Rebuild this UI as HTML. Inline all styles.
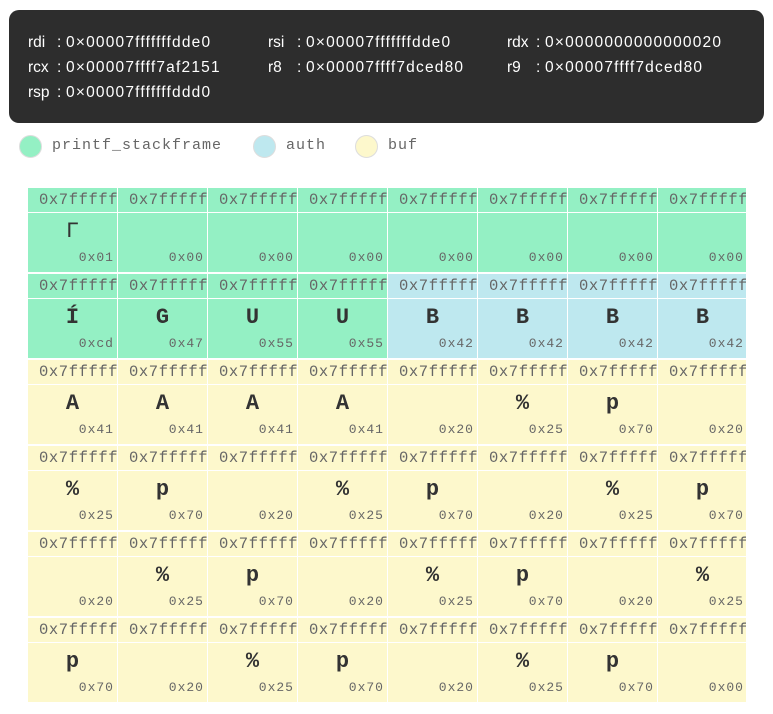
<!DOCTYPE html>
<html><head><meta charset="utf-8"><style>
*{margin:0;padding:0;box-sizing:border-box}
body{width:773px;height:714px;background:#fff;position:relative;overflow:hidden;font-family:"Liberation Sans",sans-serif}
.reg{position:absolute;left:9px;top:10px;width:755px;height:113px;background:#2d2d2d;border-radius:10px;color:#fff;font-size:15.5px}
.reg span{position:absolute;white-space:nowrap}
.reg .v{letter-spacing:1.2px}
.leg{position:absolute;top:135px;height:22px;font-family:"Liberation Mono",monospace;font-size:15px;letter-spacing:1px;color:#666;line-height:22px;padding-left:33px}
.leg i{position:absolute;left:0;top:0;width:23px;height:23px;border-radius:50%;border:1px solid #ddd}
.grid{position:absolute;left:28px;top:188px;width:718px;height:514px;overflow:hidden;display:grid;grid-template-columns:repeat(8,89px);grid-auto-rows:84px;column-gap:1px;row-gap:2px}
.c{position:relative;overflow:hidden;font-family:"Liberation Mono",monospace}
.g{background:#94f0c4}.b{background:#bee8ef}.y{background:#fdf8cc}
.a{position:absolute;left:0;top:0;width:100%;height:25px;border-bottom:1px solid #fff;font-size:15.5px;letter-spacing:0.6px;color:#666;line-height:24px;padding-left:11px;white-space:nowrap;overflow:hidden}
.ch{position:absolute;left:0;width:100%;top:32px;text-align:center;font-size:22px;font-weight:bold;color:#333;line-height:24px}
.h{position:absolute;right:3px;top:62px;font-size:13px;letter-spacing:1px;color:#666}
</style></head><body>
<div class="reg">
<span style="left:19px;top:24px">rdi</span><span style="left:48px;top:24px">:</span><span class="v" style="left:57px;top:24px">0×00007fffffffdde0</span>
<span style="left:259px;top:24px">rsi</span><span style="left:288px;top:24px">:</span><span class="v" style="left:297px;top:24px">0×00007fffffffdde0</span>
<span style="left:498px;top:24px">rdx</span><span style="left:527px;top:24px">:</span><span class="v" style="left:536px;top:24px">0×0000000000000020</span>
<span style="left:19px;top:49px">rcx</span><span style="left:48px;top:49px">:</span><span class="v" style="left:57px;top:49px">0×00007ffff7af2151</span>
<span style="left:259px;top:49px">r8</span><span style="left:288px;top:49px">:</span><span class="v" style="left:297px;top:49px">0×00007ffff7dced80</span>
<span style="left:498px;top:49px">r9</span><span style="left:527px;top:49px">:</span><span class="v" style="left:536px;top:49px">0×00007ffff7dced80</span>
<span style="left:19px;top:74px">rsp</span><span style="left:48px;top:74px">:</span><span class="v" style="left:57px;top:74px">0×00007fffffffddd0</span>
</div>
<div class="leg" style="left:19px"><i style="background:#94f0c4"></i>printf_stackframe</div>
<div class="leg" style="left:253px"><i style="background:#bee8ef"></i>auth</div>
<div class="leg" style="left:355px"><i style="background:#fdf8cc"></i>buf</div>
<div class="grid">
<div class="c g"><div class="a">0x7fffff</div><div class="ch" style="font-weight:normal">Γ</div><div class="h">0x01</div></div>
<div class="c g"><div class="a">0x7fffff</div><div class="h">0x00</div></div>
<div class="c g"><div class="a">0x7fffff</div><div class="h">0x00</div></div>
<div class="c g"><div class="a">0x7fffff</div><div class="h">0x00</div></div>
<div class="c g"><div class="a">0x7fffff</div><div class="h">0x00</div></div>
<div class="c g"><div class="a">0x7fffff</div><div class="h">0x00</div></div>
<div class="c g"><div class="a">0x7fffff</div><div class="h">0x00</div></div>
<div class="c g"><div class="a">0x7fffff</div><div class="h">0x00</div></div>

<div class="c g"><div class="a">0x7fffff</div><div class="ch">Í</div><div class="h">0xcd</div></div>
<div class="c g"><div class="a">0x7fffff</div><div class="ch">G</div><div class="h">0x47</div></div>
<div class="c g"><div class="a">0x7fffff</div><div class="ch">U</div><div class="h">0x55</div></div>
<div class="c g"><div class="a">0x7fffff</div><div class="ch">U</div><div class="h">0x55</div></div>
<div class="c b"><div class="a">0x7fffff</div><div class="ch">B</div><div class="h">0x42</div></div>
<div class="c b"><div class="a">0x7fffff</div><div class="ch">B</div><div class="h">0x42</div></div>
<div class="c b"><div class="a">0x7fffff</div><div class="ch">B</div><div class="h">0x42</div></div>
<div class="c b"><div class="a">0x7fffff</div><div class="ch">B</div><div class="h">0x42</div></div>

<div class="c y"><div class="a">0x7fffff</div><div class="ch">A</div><div class="h">0x41</div></div>
<div class="c y"><div class="a">0x7fffff</div><div class="ch">A</div><div class="h">0x41</div></div>
<div class="c y"><div class="a">0x7fffff</div><div class="ch">A</div><div class="h">0x41</div></div>
<div class="c y"><div class="a">0x7fffff</div><div class="ch">A</div><div class="h">0x41</div></div>
<div class="c y"><div class="a">0x7fffff</div><div class="h">0x20</div></div>
<div class="c y"><div class="a">0x7fffff</div><div class="ch">%</div><div class="h">0x25</div></div>
<div class="c y"><div class="a">0x7fffff</div><div class="ch">p</div><div class="h">0x70</div></div>
<div class="c y"><div class="a">0x7fffff</div><div class="h">0x20</div></div>

<div class="c y"><div class="a">0x7fffff</div><div class="ch">%</div><div class="h">0x25</div></div>
<div class="c y"><div class="a">0x7fffff</div><div class="ch">p</div><div class="h">0x70</div></div>
<div class="c y"><div class="a">0x7fffff</div><div class="h">0x20</div></div>
<div class="c y"><div class="a">0x7fffff</div><div class="ch">%</div><div class="h">0x25</div></div>
<div class="c y"><div class="a">0x7fffff</div><div class="ch">p</div><div class="h">0x70</div></div>
<div class="c y"><div class="a">0x7fffff</div><div class="h">0x20</div></div>
<div class="c y"><div class="a">0x7fffff</div><div class="ch">%</div><div class="h">0x25</div></div>
<div class="c y"><div class="a">0x7fffff</div><div class="ch">p</div><div class="h">0x70</div></div>

<div class="c y"><div class="a">0x7fffff</div><div class="h">0x20</div></div>
<div class="c y"><div class="a">0x7fffff</div><div class="ch">%</div><div class="h">0x25</div></div>
<div class="c y"><div class="a">0x7fffff</div><div class="ch">p</div><div class="h">0x70</div></div>
<div class="c y"><div class="a">0x7fffff</div><div class="h">0x20</div></div>
<div class="c y"><div class="a">0x7fffff</div><div class="ch">%</div><div class="h">0x25</div></div>
<div class="c y"><div class="a">0x7fffff</div><div class="ch">p</div><div class="h">0x70</div></div>
<div class="c y"><div class="a">0x7fffff</div><div class="h">0x20</div></div>
<div class="c y"><div class="a">0x7fffff</div><div class="ch">%</div><div class="h">0x25</div></div>

<div class="c y"><div class="a">0x7fffff</div><div class="ch">p</div><div class="h">0x70</div></div>
<div class="c y"><div class="a">0x7fffff</div><div class="h">0x20</div></div>
<div class="c y"><div class="a">0x7fffff</div><div class="ch">%</div><div class="h">0x25</div></div>
<div class="c y"><div class="a">0x7fffff</div><div class="ch">p</div><div class="h">0x70</div></div>
<div class="c y"><div class="a">0x7fffff</div><div class="h">0x20</div></div>
<div class="c y"><div class="a">0x7fffff</div><div class="ch">%</div><div class="h">0x25</div></div>
<div class="c y"><div class="a">0x7fffff</div><div class="ch">p</div><div class="h">0x70</div></div>
<div class="c y"><div class="a">0x7fffff</div><div class="h">0x00</div></div>
</div>
</body></html>
